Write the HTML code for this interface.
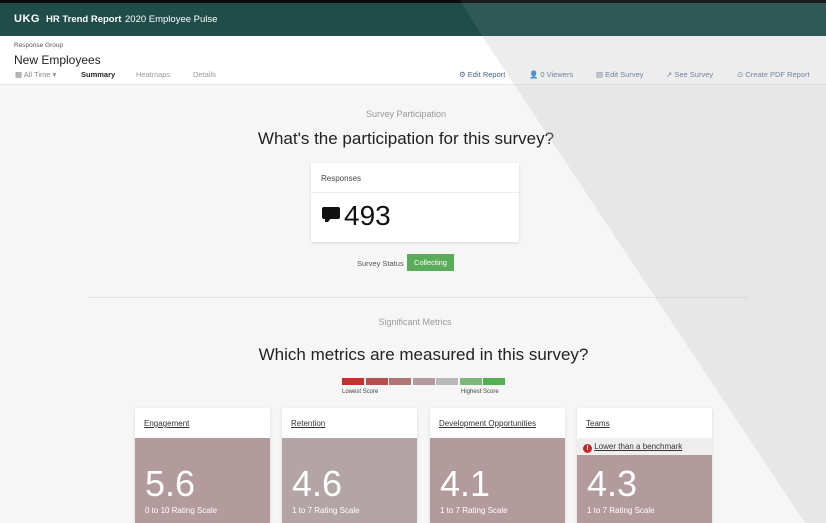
<!DOCTYPE html>
<html><head><meta charset="utf-8"><style>
*{margin:0;padding:0;box-sizing:border-box}
body{width:826px;height:523px;overflow:hidden;position:relative;background:#f6f6f6;font-family:"Liberation Sans",sans-serif;color:#333}
.a{position:absolute;white-space:nowrap}
.hdr{position:absolute;left:0;top:0;width:826px;height:36px;background:#1f4d4a;border-top:3px solid #0a0a0a}
.nav{position:absolute;left:0;top:36px;width:826px;height:49px;background:#fff;border-bottom:1px solid #e6e6e6}
.card{position:absolute;background:#fff;box-shadow:0 1px 3px rgba(0,0,0,.12)}
.mc{position:absolute;top:408px;width:135px;height:115px;background:#fff;box-shadow:0 1px 3px rgba(0,0,0,.12)}
.mc .t{position:absolute;left:9px;top:11px;font-size:8px;text-decoration:underline;color:#333}
.mc .b{position:absolute;left:0;top:30px;right:0;bottom:0;background:#b39a9c;color:#fff}
.mc .n{position:absolute;left:10px;top:25px;font-size:36px}
.mc .s{position:absolute;left:10px;top:68px;font-size:8px}
.nl{font-size:7.5px;color:#4a6488;top:70px}
</style></head><body>
<div class="hdr"></div>
<div class="a" style="left:14px;top:13px;color:#fff;font-size:11px;font-weight:bold;letter-spacing:.5px">UKG</div>
<div class="a" style="left:46px;top:14px;color:#fff;font-size:9.5px;font-weight:bold">HR Trend Report</div>
<div class="a" style="left:125px;top:14px;color:#fff;font-size:9.5px">2020 Employee Pulse</div>
<div class="nav"></div>
<div class="a" style="left:14px;top:42px;font-size:6.5px;color:#555">Response Group</div>
<div class="a" style="left:14px;top:53px;font-size:12px;color:#222">New Employees</div>
<div class="a" style="left:15px;top:70px;font-size:7.5px;color:#888">▦ All Time ▾</div>
<div class="a" style="left:81px;top:70px;font-size:7.5px;color:#222;font-weight:bold">Summary</div>
<div class="a" style="left:136px;top:70px;font-size:7.5px;color:#999">Heatmaps</div>
<div class="a" style="left:193px;top:70px;font-size:7.5px;color:#999">Details</div>
<div class="a nl" style="left:459px">⚙ Edit Report</div>
<div class="a nl" style="left:529px">👤 0 Viewers</div>
<div class="a nl" style="left:596px">▤ Edit Survey</div>
<div class="a nl" style="left:666px">↗ See Survey</div>
<div class="a nl" style="left:737px">⊙ Create PDF Report</div>

<div class="a" style="left:0;width:812px;text-align:center;top:109px;font-size:9px;color:#999">Survey Participation</div>
<div class="a" style="left:0;width:812px;text-align:center;top:129px;font-size:17px;color:#222">What's the participation for this survey?</div>
<div class="card" style="left:311px;top:163px;width:208px;height:79px">
<div style="height:30px;border-bottom:1px solid #eee;font-size:8px;padding:11px 0 0 10px;color:#444">Responses</div>
<div class="a" style="left:11px;top:44px;width:18px;height:12px;background:#111;border-radius:2px"></div>
<div class="a" style="left:14px;top:55px;width:0;height:0;border-left:3px solid #111;border-right:3px solid transparent;border-top:4px solid #111"></div>
<div class="a" style="left:33px;top:37px;font-size:28px;color:#111">493</div>
</div>
<div class="a" style="left:357px;top:259px;font-size:7.5px;color:#555">Survey Status</div>
<div class="a" style="left:407px;top:254px;width:47px;height:17px;background:#5aac5b;color:#fff;font-size:7.5px;text-align:center;line-height:17px">Collecting</div>
<div class="a" style="left:88px;top:297px;width:660px;height:1px;background:#e2e2e2"></div>
<div class="a" style="left:0;width:830px;text-align:center;top:317px;font-size:9px;color:#999">Significant Metrics</div>
<div class="a" style="left:0;width:847px;text-align:center;top:345px;font-size:17px;color:#222">Which metrics are measured in this survey?</div>
<div class="a" style="left:342px;top:378px;display:flex;gap:1.5px">
<span style="width:22px;height:7px;background:#c8302e"></span><span style="width:22px;height:7px;background:#b84d50"></span><span style="width:22px;height:7px;background:#b27476"></span><span style="width:22px;height:7px;background:#b3999b"></span><span style="width:22px;height:7px;background:#b9b9b9"></span><span style="width:22px;height:7px;background:#7ab87a"></span><span style="width:22px;height:7px;background:#4fb24f"></span></div>
<div class="a" style="left:342px;top:389px;font-size:6px;color:#444">Lowest Score</div>
<div class="a" style="left:461px;top:389px;font-size:6px;color:#444">Highest Score</div>

<div class="mc" style="left:135px"><div class="t">Engagement</div><div class="b"><div class="n">5.6</div><div class="s">0 to 10 Rating Scale</div></div></div>
<div class="mc" style="left:282px"><div class="t">Retention</div><div class="b" style="background:#b3a5a6"><div class="n">4.6</div><div class="s">1 to 7 Rating Scale</div></div></div>
<div class="mc" style="left:430px"><div class="t">Development Opportunities</div><div class="b"><div class="n">4.1</div><div class="s">1 to 7 Rating Scale</div></div></div>
<div class="mc" style="left:577px"><div class="t">Teams</div>
<div class="a" style="left:0;top:30px;width:135px;height:17px;background:#eee;font-size:8px;padding:4px 0 0 6px"><span style="display:inline-block;width:9px;height:9px;border-radius:50%;background:#c62828;color:#fff;font-size:7px;text-align:center;line-height:9px;font-weight:bold;vertical-align:-1px">!</span> <span style="text-decoration:underline">Lower than a benchmark</span></div>
<div class="b" style="top:47px"><div class="n" style="top:8px">4.3</div><div class="s" style="top:51px">1 to 7 Rating Scale</div></div></div>

<svg class="a" style="left:0;top:0" width="826" height="523">
<polygon points="460,0 826,0 826,36 482,36" fill="#fff" fill-opacity=".07"/>
<polygon points="482,36 826,36 826,523 805,523" fill="#c8c8c8" fill-opacity=".32"/></svg>
</body></html>
